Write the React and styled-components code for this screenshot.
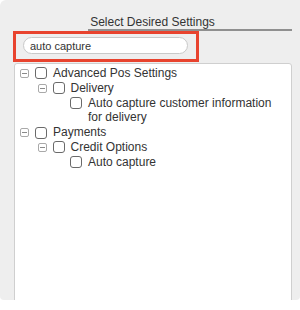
import styled, { createGlobalStyle } from 'styled-components';

const GlobalStyle = createGlobalStyle`
    html, body {
        margin: 0;
        padding: 0;
        background: #ffffff;
    }
    body {
        font-family: "Liberation Sans", Arial, sans-serif;
        color: #333333;
    }
`;

const Page = styled.div`
    width: 300px;
    height: 300px;
    background: #eeeeee;
    border-radius: 6px 0 4px 4px;
    display: flex;
    flex-direction: column;

    & > * {
        flex-shrink: 0;
    }
`;

const Header = styled.div`
    margin: 15px 0 0 88px;
    width: 204px;
    padding-right: 75px;
    box-sizing: border-box;
    text-align: center;
    font-size: 12px;
    line-height: 14px;
    color: #333;
    border-bottom: 2px solid #8f8f8f;
    white-space: nowrap;
`;

const SearchBox = styled.div`
    margin-left: 13px;
    width: 186px;
    height: 31px;
    box-sizing: border-box;
    border: 3px solid #e8432e;
    padding: 3px 8px 0 7px;
`;

const SearchInput = styled.input`
    display: block;
    width: 165px;
    height: 17px;
    box-sizing: border-box;
    border: 1px solid #c9c9c9;
    border-radius: 9px;
    background: #fff;
    padding: 0 6px;
    font-family: "Liberation Sans", Arial, sans-serif;
    font-size: 11px;
    color: #333;
    outline: none;
`;

const TreePanel = styled.div`
    margin: 1px 0 0 14px;
    width: 278px;
    height: 244px;
    box-sizing: border-box;
    background: #fff;
    border: 1px solid #cfcfcf;
    border-radius: 3px;
    padding: 2px 10px 0 5px;
`;

const Row = styled.div`
    display: flex;
    align-items: flex-start;
    margin-left: ${p => p.$level * 17.5}px;
    font-size: 12px;
    line-height: 14.8px;
`;

const Toggle = styled.span`
    flex-shrink: 0;
    width: 9px;
    height: 9px;
    margin-top: 2.9px;
    box-sizing: border-box;
    border: 1px solid ${p => (p.$hidden ? 'transparent' : '#a9a9a9')};
    border-radius: 2px;
    display: flex;
    align-items: center;
    justify-content: center;

    &::before {
        content: '';
        display: ${p => (p.$hidden ? 'none' : 'block')};
        width: 5px;
        height: 1px;
        background: #8a8a8a;
    }
`;

const Check = styled.span`
    flex-shrink: 0;
    width: 12px;
    height: 12px;
    margin: 1.4px 6px 0 6px;
    box-sizing: border-box;
    border: 1px solid #6a6a6a;
    border-radius: 3px;
    background: #fff;
`;

const Label = styled.span`
    color: #333;
`;

const nodes = [
    { level: 0, label: 'Advanced Pos Settings', parent: true },
    { level: 1, label: 'Delivery', parent: true },
    { level: 2, label: 'Auto capture customer information for delivery' },
    { level: 0, label: 'Payments', parent: true },
    { level: 1, label: 'Credit Options', parent: true },
    { level: 2, label: 'Auto capture' },
];

const App = () => (
    <>
        <GlobalStyle />
        <Page>
            <Header>Select Desired Settings</Header>
            <SearchBox>
                <SearchInput defaultValue="auto capture" />
            </SearchBox>
            <TreePanel>
                {nodes.map((n, i) => (
                    <Row key={i} $level={n.level}>
                        <Toggle $hidden={!n.parent} />
                        <Check />
                        <Label>{n.label}</Label>
                    </Row>
                ))}
            </TreePanel>
        </Page>
    </>
);

export default App;
